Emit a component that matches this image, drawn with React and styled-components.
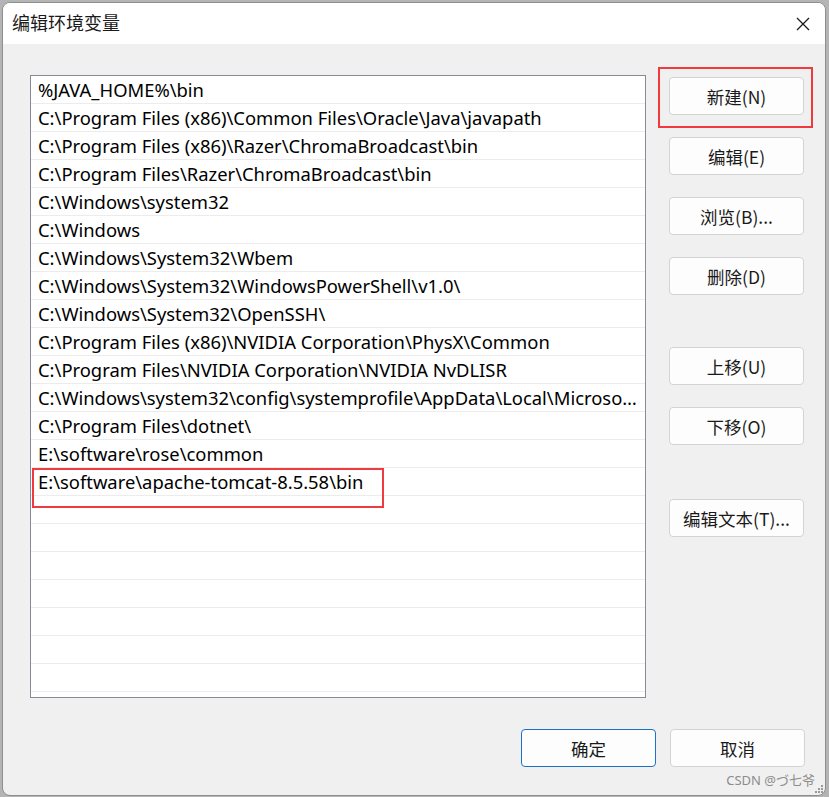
import styled, { createGlobalStyle } from "styled-components";

const paths = [
  "%JAVA_HOME%\\bin",
  "C:\\Program Files (x86)\\Common Files\\Oracle\\Java\\javapath",
  "C:\\Program Files (x86)\\Razer\\ChromaBroadcast\\bin",
  "C:\\Program Files\\Razer\\ChromaBroadcast\\bin",
  "C:\\Windows\\system32",
  "C:\\Windows",
  "C:\\Windows\\System32\\Wbem",
  "C:\\Windows\\System32\\WindowsPowerShell\\v1.0\\",
  "C:\\Windows\\System32\\OpenSSH\\",
  "C:\\Program Files (x86)\\NVIDIA Corporation\\PhysX\\Common",
  "C:\\Program Files\\NVIDIA Corporation\\NVIDIA NvDLISR",
  "C:\\Windows\\system32\\config\\systemprofile\\AppData\\Local\\Microsoft\\WindowsApps",
  "C:\\Program Files\\dotnet\\",
  "E:\\software\\rose\\common",
  "E:\\software\\apache-tomcat-8.5.58\\bin",
];

const rows = [...paths, ...Array(7).fill("")];

const sideButtons = [
  { label: "新建(N)", top: 2, marked: true },
  { label: "编辑(E)", top: 22 },
  { label: "浏览(B)...", top: 22 },
  { label: "删除(D)", top: 22 },
  { label: "上移(U)", top: 52 },
  { label: "下移(O)", top: 22 },
  { label: "编辑文本(T)...", top: 54 },
];

export default function App() {
  return (
    <>
      <GlobalStyle />
      <Dialog>
        <TitleBar>
          <Title>编辑环境变量</Title>
          <CloseIcon viewBox="0 0 16 16">
            <path d="M2 2 L14 14 M14 2 L2 14" stroke="#1a1a1a" strokeWidth="1.3" />
          </CloseIcon>
        </TitleBar>
        <Body>
          <Main>
            <List>
              {rows.map((text, i) => (
                <Row key={i}>{text}</Row>
              ))}
              <Mark style={{ left: 1, top: 392, width: 352, height: 40 }} />
            </List>
            <Side>
              {sideButtons.map((b) => (
                <SideSlot key={b.label} $top={b.top}>
                  <Button>{b.label}</Button>
                  {b.marked && (
                    <Mark style={{ left: -11, top: -10, right: -9, bottom: -13 }} />
                  )}
                </SideSlot>
              ))}
            </Side>
          </Main>
          <Footer>
            <Button $primary>确定</Button>
            <Button>取消</Button>
          </Footer>
        </Body>
        <Watermark>CSDN @づ七爷</Watermark>
        <Grip viewBox="0 0 12 12">
          {[
            [9, 3],
            [9, 6],
            [6, 6],
            [9, 9],
            [6, 9],
            [3, 9],
          ].map(([x, y]) => (
            <rect key={`${x}-${y}`} x={x} y={y} width="2" height="2" fill="#9a9a9a" />
          ))}
        </Grip>
      </Dialog>
    </>
  );
}

const GlobalStyle = createGlobalStyle`
  html, body {
    margin: 0;
    padding: 0;
    background: #b4b4b4;
  }
  body {
    font-family: "Noto Sans", "Noto Sans CJK SC", sans-serif;
  }
`;

const Dialog = styled.div`
  position: relative;
  box-sizing: border-box;
  width: 824px;
  height: 794px;
  margin: 2px 0 0 2px;
  background: #f0f0f0;
  border: 1px solid #8e8e8e;
  border-radius: 8px;
  overflow: hidden;
  display: flex;
  flex-direction: column;
`;

const TitleBar = styled.div`
  height: 41px;
  background: #ffffff;
  display: flex;
  align-items: center;
  justify-content: space-between;
  padding: 0 14px 0 9px;
`;

const Title = styled.div`
  font-family: "Noto Sans CJK SC", sans-serif;
  font-size: 18px;
  color: #1a1a1a;
  margin-top: -3px;
`;

const CloseIcon = styled.svg`
  width: 16px;
  height: 16px;
`;

const Body = styled.div`
  flex: 1;
  display: flex;
  flex-direction: column;
  padding: 31px 20px 25px 27px;
`;

const Main = styled.div`
  display: flex;
  gap: 23px;
`;

const List = styled.div`
  position: relative;
  box-sizing: border-box;
  width: 616px;
  height: 623px;
  background: #ffffff;
  border: 1px solid #8a8a96;
  display: flex;
  flex-direction: column;
  overflow: hidden;
`;

const Row = styled.div`
  flex: none;
  box-sizing: border-box;
  height: 28px;
  line-height: 26px;
  padding: 1px 8px 0 7px;
  border-bottom: 1px solid #ececec;
  font-size: 18.4px;
  color: #000000;
  white-space: nowrap;
  overflow: hidden;
  text-overflow: ellipsis;
`;

const Mark = styled.div`
  position: absolute;
  box-sizing: border-box;
  border: 2px solid #ef3b3f;
  pointer-events: none;
`;

const Side = styled.div`
  display: flex;
  flex-direction: column;
`;

const SideSlot = styled.div`
  position: relative;
  margin-top: ${(p) => p.$top}px;
`;

const Button = styled.div`
  box-sizing: border-box;
  width: 135px;
  height: 38px;
  display: flex;
  align-items: center;
  justify-content: center;
  background: #fdfdfd;
  border: 1px solid ${(p) => (p.$primary ? "#1a73c9" : "#d3d3d3")};
  border-radius: 4px;
  font-family: "Noto Sans CJK SC", sans-serif;
  font-size: 17.5px;
  color: #1a1a1a;
`;

const Footer = styled.div`
  margin-top: 31px;
  display: flex;
  justify-content: flex-end;
  gap: 14px;
`;

const Watermark = styled.div`
  position: absolute;
  right: 10px;
  bottom: 6px;
  font-family: "Noto Sans", "Noto Sans CJK SC", sans-serif;
  font-size: 13px;
  color: #8c8c8c;
`;

const Grip = styled.svg`
  position: absolute;
  right: 1px;
  bottom: 1px;
  width: 12px;
  height: 12px;
`;
